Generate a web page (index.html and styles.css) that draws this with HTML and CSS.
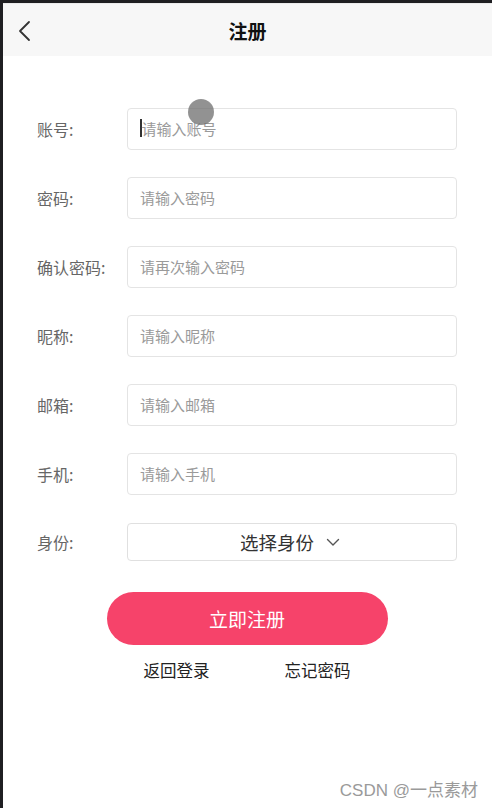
FILE: index.html
```html
<!DOCTYPE html>
<html lang="zh-CN">
<head>
  <meta charset="UTF-8">
  <meta name="viewport" content="width=device-width, initial-scale=1">
  <title>注册</title>
  <link rel="stylesheet" href="styles.css">
</head>
<body>
  <div class="page">
    <header class="nav">
      <span class="back">
        <svg width="14" height="22" viewBox="0 0 14 22"><path d="M12 2 L3 11 L12 20" fill="none" stroke="#333" stroke-width="1.8" stroke-linecap="round" stroke-linejoin="round"/></svg>
      </span>
      <h1 class="title">注册</h1>
    </header>

    <form class="form">
      <div class="row">
        <label>账号:</label>
        <div class="field focused"><span class="caret"></span>请输入账号</div>
      </div>
      <div class="row">
        <label>密码:</label>
        <div class="field">请输入密码</div>
      </div>
      <div class="row">
        <label>确认密码:</label>
        <div class="field">请再次输入密码</div>
      </div>
      <div class="row">
        <label>昵称:</label>
        <div class="field">请输入昵称</div>
      </div>
      <div class="row">
        <label>邮箱:</label>
        <div class="field">请输入邮箱</div>
      </div>
      <div class="row">
        <label>手机:</label>
        <div class="field">请输入手机</div>
      </div>
      <div class="row row-select">
        <label>身份:</label>
        <div class="select">
          <span>选择身份</span>
          <svg width="14" height="9" viewBox="0 0 14 9"><path d="M1.5 1.5 L7 7 L12.5 1.5" fill="none" stroke="#555" stroke-width="1.4" stroke-linecap="round" stroke-linejoin="round"/></svg>
        </div>
      </div>

      <button type="button" class="submit">立即注册</button>

      <div class="links">
        <a>返回登录</a>
        <a>忘记密码</a>
      </div>
    </form>

    <div class="watermark">CSDN @一点素材</div>
    <div class="pointer"></div>
  </div>
</body>
</html>
```

FILE: styles.css
```css
html, body {
  margin: 0;
  padding: 0;
  background: #1f1f22;
}

body {
  font-family: "Noto Sans CJK SC", "Noto Sans", sans-serif;
  color: #333;
}

.page {
  position: relative;
  margin-left: 3px;
  margin-top: 3px;
  height: 805px;
  background: #fff;
  overflow: hidden;
}

.nav {
  height: 52px;
  background: #f7f7f7;
  border-top: 1px solid #ebebeb;
  display: flex;
  align-items: center;
  justify-content: center;
  position: relative;
}

.back {
  position: absolute;
  left: 14px;
  top: 16px;
}

.title {
  margin: 0;
  font-size: 19px;
  font-weight: bold;
  color: #111;
}

.form {
  padding: 52px 35px 0 34px;
}

.row {
  display: flex;
  align-items: center;
  margin-bottom: 27px;
}

.row label {
  width: 90px;
  font-size: 16px;
  line-height: 18px;
  padding-bottom: 1px;
  color: #666;
}

.field {
  flex: 1;
  border: 1px solid #e4e4e4;
  border-radius: 4px;
  display: flex;
  align-items: center;
  padding-left: 12px;
  padding-bottom: 2px;
  height: 38px;
  font-size: 15px;
  color: #9a9a9a;
}

.caret {
  width: 1.5px;
  height: 18px;
  background: #333;
}

.row-select {
  margin-top: 28px;
  margin-bottom: 31px;
}

.select {
  flex: 1;
  height: 36px;
  border: 1px solid #e0e0e0;
  border-radius: 4px;
  display: flex;
  align-items: center;
  justify-content: center;
  gap: 12px;
  font-size: 18.5px;
  color: #333;
  padding-right: 4px;
}

.submit {
  display: block;
  margin: 0 auto;
  width: 281px;
  height: 53px;
  border: none;
  border-radius: 27px;
  background: #f6436a;
  color: #fff;
  font-family: inherit;
  font-size: 19px;
}

.links {
  display: flex;
  justify-content: center;
  gap: 75px;
  margin-top: 13px;
  font-size: 16.5px;
  color: #222;
}

.watermark {
  position: absolute;
  right: 14px;
  bottom: 7px;
  font-family: "Liberation Sans", "Noto Sans CJK SC", sans-serif;
  font-size: 17px;
  color: #9a9a9a;
}

.pointer {
  position: absolute;
  left: 185px;
  top: 96px;
  width: 26px;
  height: 26px;
  border-radius: 50%;
  background: rgba(110, 110, 110, 0.75);
}
```
